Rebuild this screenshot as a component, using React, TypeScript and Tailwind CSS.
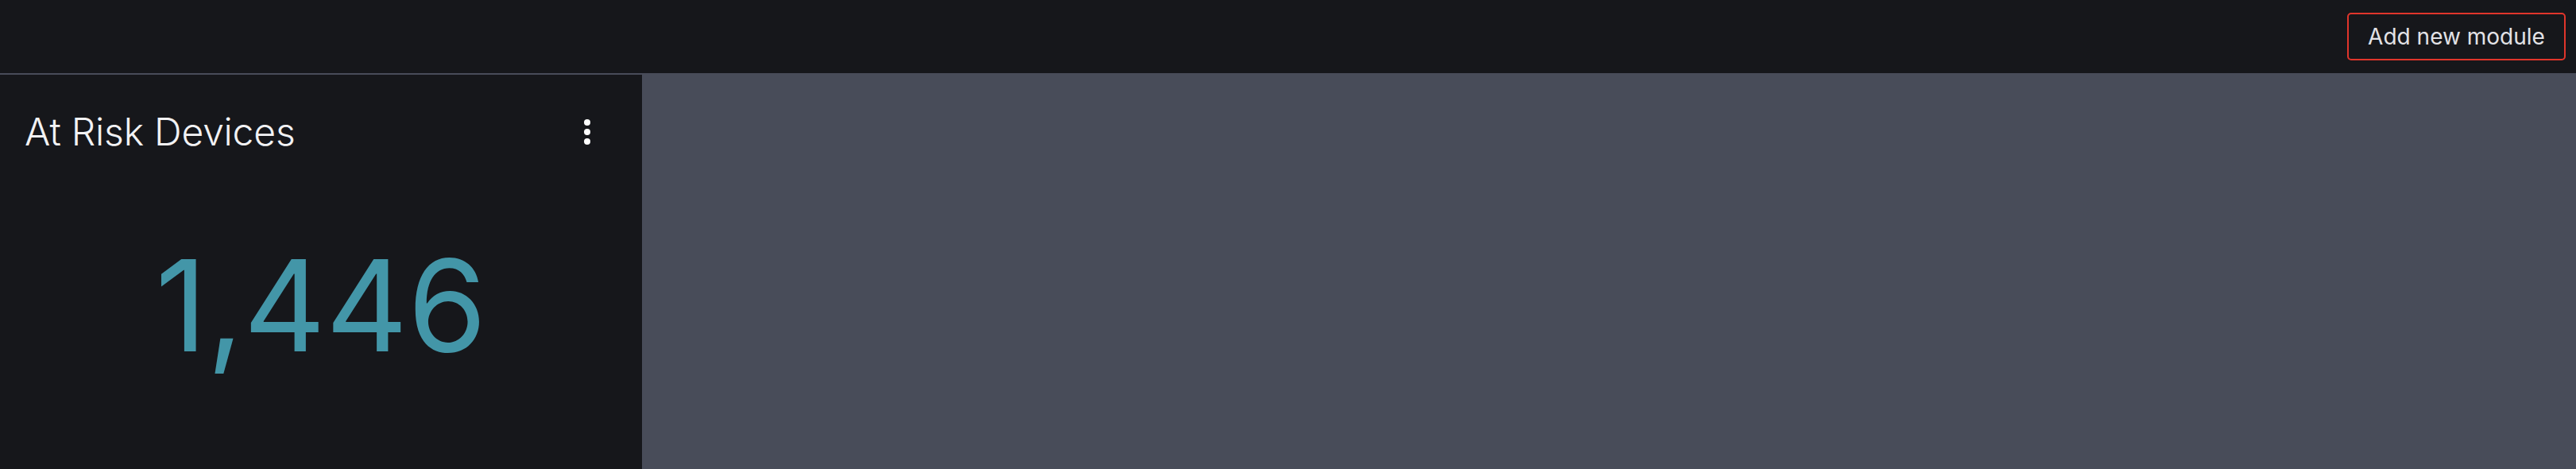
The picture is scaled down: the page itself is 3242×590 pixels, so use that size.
import React from "react";

export default function App() {
  return (
    <div className="w-[3242px] h-[590px] overflow-hidden bg-[#484c59] flex flex-col" style={{ fontFamily: "Inter, 'Noto Sans', sans-serif" }}>
      <header className="h-[92px] shrink-0 bg-[#16171b] flex items-center justify-end pr-[13px]">
        <button className="h-[60px] w-[275px] border-2 border-[#e0352b] rounded-[5px] text-[28px] text-[#e2e2e6] flex items-center justify-center">
          Add new module
        </button>
      </header>
      <main className="flex-1 pt-[2px] flex">
        <section className="w-[808px] h-full bg-[#16171b] flex flex-col">
          <div className="flex items-center justify-between pl-[31px] pr-[64px] pt-[42px]">
            <h2 className="text-[48px] font-light text-[#f2f2f4] leading-[60px] tracking-[-0.2px]">At Risk Devices</h2>
            <svg width="10" height="34" viewBox="0 0 10 34" className="fill-white">
              <circle cx="5" cy="5" r="4" />
              <circle cx="5" cy="17" r="4" />
              <circle cx="5" cy="29" r="4" />
            </svg>
          </div>
          <div className="flex justify-center pt-[108px]">
            <span className="text-[160px] leading-[160px] text-[#4396a8]">1,446</span>
          </div>
        </section>
      </main>
    </div>
  );
}
